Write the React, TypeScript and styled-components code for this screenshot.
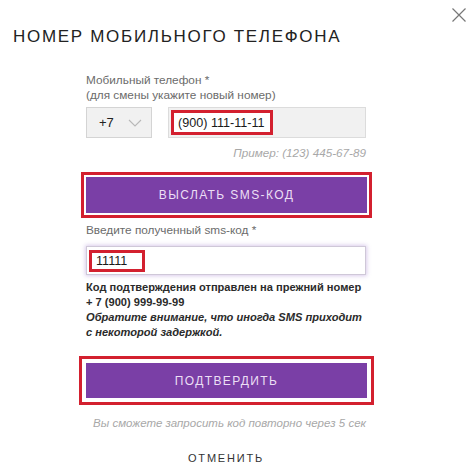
import React from 'react';
import styled, { createGlobalStyle } from 'styled-components';

const GlobalStyle = createGlobalStyle`
  html, body {
    margin: 0;
    padding: 0;
    background: #fff;
  }
  body {
    font-family: 'Liberation Sans', Arial, sans-serif;
    color: #333;
  }
`;

const PURPLE = '#7a3fa6';
const MARK = '#d3202f';

const Modal = styled.div`
  position: relative;
  width: 474px;
  height: 476px;
  box-sizing: border-box;
  padding-top: 27px;
  overflow: hidden;
`;

const CloseButton = styled.button`
  position: absolute;
  top: 7px;
  right: 7px;
  width: 16px;
  height: 16px;
  padding: 0;
  border: none;
  background: none;
  cursor: pointer;
`;

const Title = styled.h2`
  margin: 0 0 0 13px;
  font-size: 17px;
  line-height: 20px;
  font-weight: normal;
  letter-spacing: 1.7px;
  color: #222;
`;

const Form = styled.div`
  width: 280px;
  margin: 26px 0 0 86px;
  display: flex;
  flex-direction: column;
  white-space: nowrap;
`;

const Label = styled.div<{ $top?: number }>`
  margin-top: ${(p) => p.$top ?? 0}px;
  font-size: 11.8px;
  line-height: 15px;
  color: #6b6b6b;
`;

const PhoneRow = styled.div`
  display: flex;
  gap: 16px;
  margin-top: 4px;
  height: 31px;
`;

const Select = styled.div`
  width: 66px;
  box-sizing: border-box;
  border: 1px solid #d4d4d4;
  background: #f1f1f1;
  display: flex;
  align-items: center;
  justify-content: space-between;
  padding: 0 9px 0 12px;
  font-size: 13px;
  color: #222;
`;

const PhoneInput = styled.div`
  flex: 1;
  box-sizing: border-box;
  border: 1px solid #dcdcdc;
  background: #f1f1f1;
  display: flex;
  align-items: center;
  padding-left: 2px;
`;

const Marked = styled.span<{ $w: number; $h: number }>`
  display: inline-flex;
  align-items: center;
  box-sizing: border-box;
  width: ${(p) => p.$w}px;
  height: ${(p) => p.$h}px;
  border: 3px solid ${MARK};
  padding-left: 4px;
  font-size: 12.6px;
  color: #1a1a1a;
  background: #fff;
`;

const Example = styled.div`
  margin-top: 7px;
  text-align: right;
  font-size: 11.7px;
  line-height: 15px;
  font-style: italic;
  color: #a8a8a8;
`;

const Button = styled.button<{ $top: number; $h: number; $gap: number }>`
  margin-top: ${(p) => p.$top}px;
  height: ${(p) => p.$h}px;
  width: 281px;
  border: none;
  background: ${PURPLE};
  color: #ecdff5;
  font-family: 'Liberation Sans', Arial, sans-serif;
  font-size: 12px;
  letter-spacing: 1.4px;
  outline: 3px solid ${MARK};
  outline-offset: ${(p) => p.$gap}px;
  cursor: pointer;
`;

const CodeInput = styled.div`
  margin-top: 8px;
  height: 29px;
  box-sizing: border-box;
  border: 1px solid #cfc8d8;
  background: #fff;
  box-shadow: 0 0 4px 1px rgba(150, 110, 200, 0.35);
  display: flex;
  align-items: center;
  padding-left: 2px;
`;

const Info = styled.div`
  margin-top: 5px;
  font-size: 11.1px;
  line-height: 15px;
  font-weight: bold;
  color: #2b2b2b;
`;

const Note = styled.div`
  font-style: italic;
`;

const Hint = styled.div`
  margin-top: 18px;
  text-align: right;
  font-size: 11.5px;
  line-height: 15px;
  font-style: italic;
  color: #a8a8a8;
`;

const Cancel = styled.button`
  margin-top: 20px;
  align-self: center;
  padding: 0;
  border: none;
  background: none;
  font-family: 'Liberation Sans', Arial, sans-serif;
  font-size: 11px;
  line-height: 15px;
  letter-spacing: 1.8px;
  color: #333;
  cursor: pointer;
`;

export default function App() {
  return (
    <>
      <GlobalStyle />
      <Modal>
        <CloseButton aria-label="Закрыть">
          <svg width="16" height="16" viewBox="0 0 16 16">
            <path d="M1.5 1.5 L14.5 14.5 M14.5 1.5 L1.5 14.5" stroke="#777" strokeWidth="1.2" fill="none" />
          </svg>
        </CloseButton>
        <Title>НОМЕР МОБИЛЬНОГО ТЕЛЕФОНА</Title>
        <Form>
          <Label>
            Мобильный телефон *
            <br />
            (для смены укажите новый номер)
          </Label>
          <PhoneRow>
            <Select>
              <span>+7</span>
              <svg width="14" height="8" viewBox="0 0 14 8">
                <path d="M1 1 L7 7 L13 1" stroke="#b8b8b8" strokeWidth="1.1" fill="none" />
              </svg>
            </Select>
            <PhoneInput>
              <Marked $w={102} $h={25}>(900) 111-11-11</Marked>
            </PhoneInput>
          </PhoneRow>
          <Example>Пример: (123) 445-67-89</Example>
          <Button $top={17} $h={36} $gap={2}>ВЫСЛАТЬ SMS-КОД</Button>
          <Label $top={10}>Введите полученный sms-код *</Label>
          <CodeInput>
            <Marked $w={56} $h={22}>11111</Marked>
          </CodeInput>
          <Info>
            Код подтверждения отправлен на прежний номер
            <br />+ 7 (900) 999-99-99
            <Note>
              Обратите внимание, что иногда SMS приходит
              <br />с некоторой задержкой.
            </Note>
          </Info>
          <Button $top={23} $h={35} $gap={4}>ПОДТВЕРДИТЬ</Button>
          <Hint>Вы сможете запросить код повторно через 5 сек</Hint>
          <Cancel>ОТМЕНИТЬ</Cancel>
        </Form>
      </Modal>
    </>
  );
}
